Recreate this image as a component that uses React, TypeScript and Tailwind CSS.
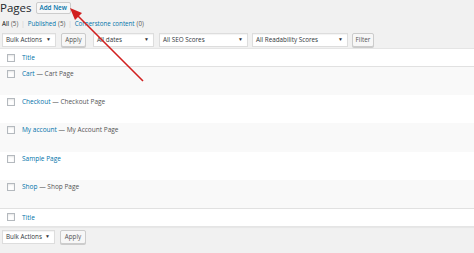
import React from 'react'

const font = { fontFamily: '"Open Sans", "Liberation Sans", sans-serif' }

function Select({ label, w }: { label: string; w: string }) {
  return (
    <div className={`${w} h-[14px] bg-white border border-[#ddd] flex items-center justify-between pl-[3px] pr-[4px] text-[6.3px] text-[#32373c] shadow-[inset_0_1px_1px_rgba(0,0,0,0.05)]`}>
      <span>{label}</span>
      <span className="text-[5px] text-[#333]">▼</span>
    </div>
  )
}

function Btn({ label, w }: { label: string; w: string }) {
  return (
    <div className={`${w} h-[14px] bg-[#f7f7f7] border border-[#ccc] rounded-[2px] flex items-center justify-center text-[6.3px] text-[#555] shadow-[0_1px_0_#ccc]`}>
      {label}
    </div>
  )
}

function Check() {
  return <div className="w-[8px] h-[8px] border border-[#b4b9be] bg-white shrink-0 shadow-[inset_0_1px_2px_rgba(0,0,0,0.1)]" />
}

const rows = [
  { t: 'Cart', s: 'Cart Page' },
  { t: 'Checkout', s: 'Checkout Page' },
  { t: 'My account', s: 'My Account Page' },
  { t: 'Sample Page', s: '' },
  { t: 'Shop', s: 'Shop Page' },
]

export default function App() {
  return (
    <div style={font} className="relative w-[474px] h-[253px] bg-[#f1f1f1] overflow-hidden">
      {/* heading */}
      <div className="flex items-center gap-[4px] pt-[1px] h-[14px]">
        <span className="text-[11.5px] text-[#23282d] leading-none">Pages</span>
        <div className="h-[12px] px-[3px] flex items-center bg-[#f7f7f7] border border-[#ccc] rounded-[2px] text-[6.3px] font-semibold text-[#0073aa]">
          Add New
        </div>
      </div>

      {/* status links */}
      <div className="h-[17px] flex items-center pl-[2px] pt-[2px] text-[6.2px] text-[#555]">
        <span className="text-[#000]">All</span>
        <span className="ml-[2px] text-[#555]">(5)</span>
        <span className="mx-[3px] text-[#ccc]">|</span>
        <span className="text-[#0073aa]">Published</span>
        <span className="ml-[2px]">(5)</span>
        <span className="mx-[3px] text-[#ccc]">|</span>
        <span className="text-[#0073aa]">Cornerstone content</span>
        <span className="ml-[2px]">(0)</span>
      </div>

      {/* filters */}
      <div className="flex items-center h-[16px] mt-[1px] pl-[2px]">
        <Select label="Bulk Actions" w="w-[54px]" />
        <div className="ml-[5px]"><Btn label="Apply" w="w-[25px]" /></div>
        <div className="ml-[7px]"><Select label="All dates" w="w-[61px]" /></div>
        <div className="ml-[5px]"><Select label="All SEO Scores" w="w-[89px]" /></div>
        <div className="ml-[4px]"><Select label="All Readability Scores" w="w-[96px]" /></div>
        <div className="ml-[4px]"><Btn label="Filter" w="w-[22px]" /></div>
      </div>

      {/* table */}
      <div className="bg-white border-y border-[#e5e5e5] shadow-[0_1px_1px_rgba(0,0,0,0.04)]">
        <div className="h-[18px] flex items-center gap-[7px] pl-[7px] border-b border-[#e1e1e1] text-[6.5px] text-[#0073aa]">
          <Check />
          <span>Title</span>
        </div>
        {rows.map((r, i) => (
          <div
            key={r.t}
            className={`h-[28.2px] flex items-start pt-[3px] gap-[7px] pl-[7px] text-[6.5px] ${i % 2 === 0 ? 'bg-[#f9f9f9]' : 'bg-white'}`}
          >
            <Check />
            <span className="leading-[8px]">
              <span className="text-[#0073aa]">{r.t}</span>
              {r.s && <span className="text-[#555]"> — {r.s}</span>}
            </span>
          </div>
        ))}
        <div className="h-[18px] flex items-center gap-[7px] pl-[7px] border-t border-[#e1e1e1] text-[6.5px] text-[#0073aa]">
          <Check />
          <span>Title</span>
        </div>
      </div>

      {/* bottom actions */}
      <div className="flex items-center h-[16px] mt-[2px] pl-[2px]">
        <Select label="Bulk Actions" w="w-[53px]" />
        <div className="ml-[5px]"><Btn label="Apply" w="w-[26px]" /></div>
      </div>

      {/* annotation arrow */}
      <svg className="absolute left-0 top-0 pointer-events-none" width="474" height="253">
        <line x1="143" y1="81" x2="76" y2="14" stroke="#d11f1f" strokeWidth="1.6" />
        <polygon points="70,8 82,13 75,20" fill="#d11f1f" />
      </svg>
    </div>
  )
}
